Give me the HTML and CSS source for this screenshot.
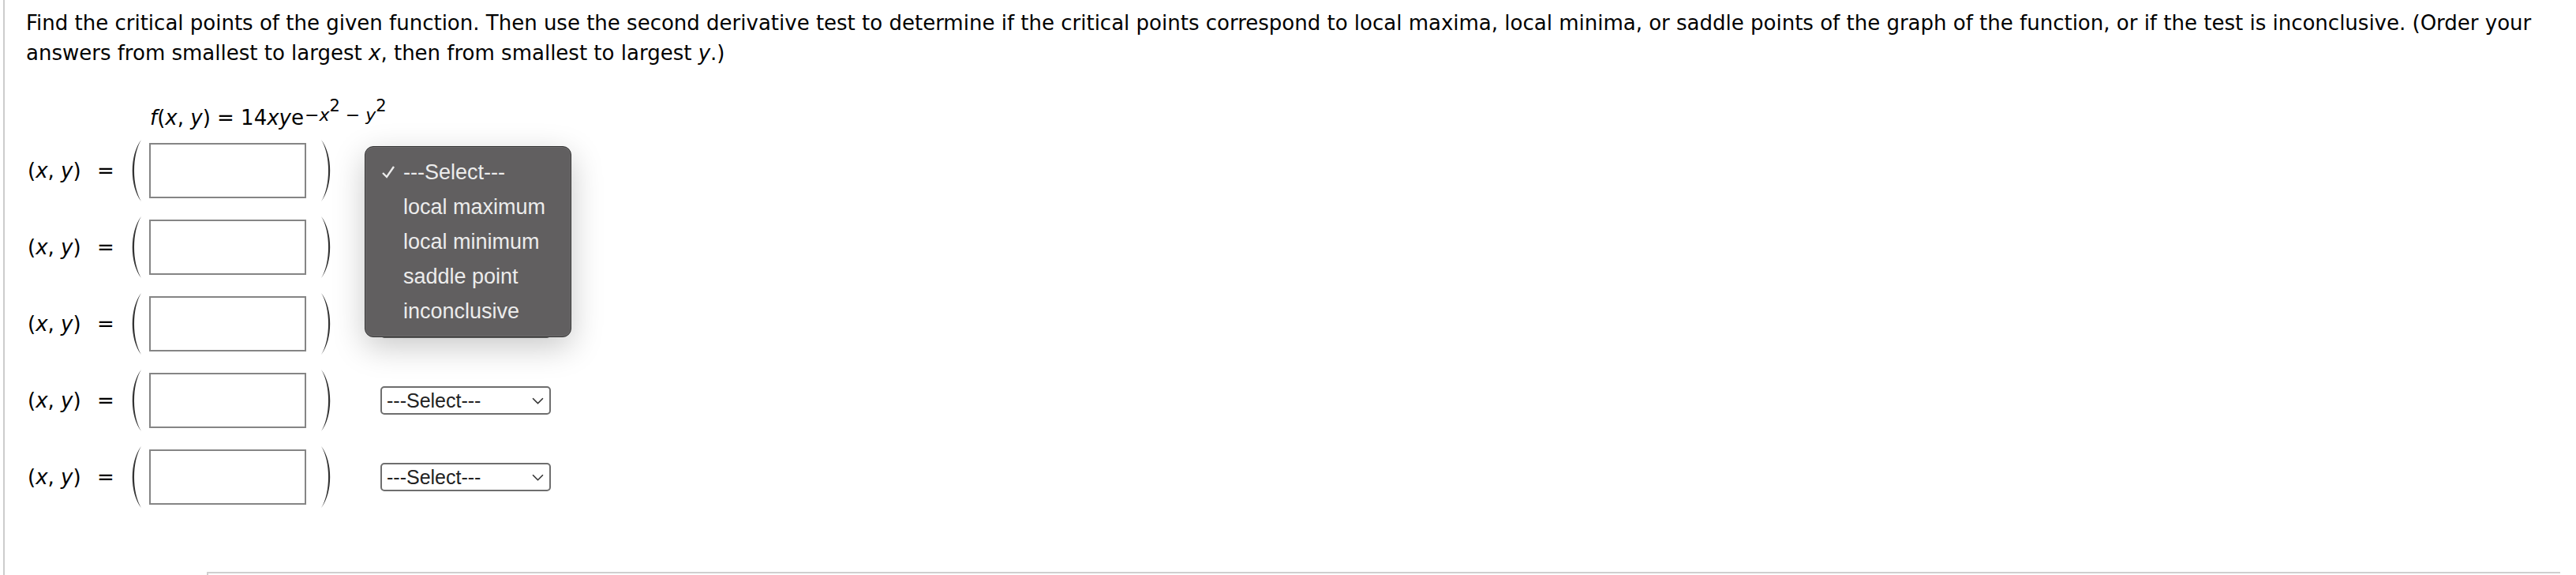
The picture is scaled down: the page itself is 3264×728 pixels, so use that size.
FILE: index.html
```html
<!DOCTYPE html>
<html lang="en">
  <head>
    <meta charset="UTF-8" />
    <meta name="viewport" content="width=device-width, initial-scale=1.0" />
    <title>Critical Points</title>
    <link rel="stylesheet" href="styles.css">
  </head>
  <body>
    <div class="question">
      <p class="prompt">Find the critical points of the given function. Then use the second derivative test to determine if the critical points correspond to local maxima, local minima, or saddle points of the graph of the function, or if the test is inconclusive. (Order your answers from smallest to largest <i>x</i>, then from smallest to largest <i>y</i>.)</p>

      <div class="formula">
        <i>f</i>(<i>x</i>, <i>y</i>) = 14<i>xy</i>e<sup class="exp">&minus;<i>x</i><sup>2</sup> &minus; <i>y</i><sup>2</sup></sup>
      </div>

      <div class="answers">
        <div class="row">
          <span class="label">(<i>x</i>, <i>y</i>) <span class="eq">=</span></span>
          <svg class="paren" viewBox="0 0 18 80"><path d="M17 1 C2 20 2 60 17 79 C5 60 5 20 17 1 Z" /></svg>
          <input class="point" type="text" />
          <svg class="paren" viewBox="0 0 18 80"><path d="M1 1 C16 20 16 60 1 79 C13 60 13 20 1 1 Z" /></svg>
          <div class="select"><span>---Select---</span><svg class="chev" viewBox="0 0 14 10"><path d="M1 2 L7 8 L13 2" /></svg></div>
        </div>
        <div class="row">
          <span class="label">(<i>x</i>, <i>y</i>) <span class="eq">=</span></span>
          <svg class="paren" viewBox="0 0 18 80"><path d="M17 1 C2 20 2 60 17 79 C5 60 5 20 17 1 Z" /></svg>
          <input class="point" type="text" />
          <svg class="paren" viewBox="0 0 18 80"><path d="M1 1 C16 20 16 60 1 79 C13 60 13 20 1 1 Z" /></svg>
          <div class="select"><span>---Select---</span><svg class="chev" viewBox="0 0 14 10"><path d="M1 2 L7 8 L13 2" /></svg></div>
        </div>
        <div class="row">
          <span class="label">(<i>x</i>, <i>y</i>) <span class="eq">=</span></span>
          <svg class="paren" viewBox="0 0 18 80"><path d="M17 1 C2 20 2 60 17 79 C5 60 5 20 17 1 Z" /></svg>
          <input class="point" type="text" />
          <svg class="paren" viewBox="0 0 18 80"><path d="M1 1 C16 20 16 60 1 79 C13 60 13 20 1 1 Z" /></svg>
          <div class="select"><span>---Select---</span><svg class="chev" viewBox="0 0 14 10"><path d="M1 2 L7 8 L13 2" /></svg></div>
        </div>
        <div class="row">
          <span class="label">(<i>x</i>, <i>y</i>) <span class="eq">=</span></span>
          <svg class="paren" viewBox="0 0 18 80"><path d="M17 1 C2 20 2 60 17 79 C5 60 5 20 17 1 Z" /></svg>
          <input class="point" type="text" />
          <svg class="paren" viewBox="0 0 18 80"><path d="M1 1 C16 20 16 60 1 79 C13 60 13 20 1 1 Z" /></svg>
          <div class="select"><span>---Select---</span><svg class="chev" viewBox="0 0 14 10"><path d="M1 2 L7 8 L13 2" /></svg></div>
        </div>
        <div class="row">
          <span class="label">(<i>x</i>, <i>y</i>) <span class="eq">=</span></span>
          <svg class="paren" viewBox="0 0 18 80"><path d="M17 1 C2 20 2 60 17 79 C5 60 5 20 17 1 Z" /></svg>
          <input class="point" type="text" />
          <svg class="paren" viewBox="0 0 18 80"><path d="M1 1 C16 20 16 60 1 79 C13 60 13 20 1 1 Z" /></svg>
          <div class="select"><span>---Select---</span><svg class="chev" viewBox="0 0 14 10"><path d="M1 2 L7 8 L13 2" /></svg></div>
        </div>

        <!-- open dropdown of the first row -->
        <ul class="menu">
          <li class="checked"><svg class="tick" viewBox="0 0 18 18"><path d="M2 10 L7 15 L16 2" /></svg>---Select---</li>
          <li>local maximum</li>
          <li>local minimum</li>
          <li>saddle point</li>
          <li>inconclusive</li>
        </ul>
      </div>

      <div class="next"></div>
    </div>
  </body>
</html>
```

FILE: styles.css
```css
html, body {
  margin: 0;
  padding: 0;
  background: #fff;
  height: 100%;
}
body {
  font-family: Verdana, "DejaVu Sans", sans-serif;
  font-size: 26px;
  color: #000;
  overflow: hidden;
}
.question {
  margin-left: 4px;
  border-left: 2px solid #cccccc;
  padding: 10px 20px 0 27px;
  height: 100%;
  box-sizing: border-box;
}
.prompt {
  margin: 0;
  line-height: 38px;
}
.formula {
  margin: 38px 0 0 157px;
  line-height: 38px;
  white-space: nowrap;
}
.exp {
  font-size: 22px;
  position: relative;
  top: -5px;
  vertical-align: baseline;
  margin-left: 1px;
}
.exp sup {
  font-size: 21px;
  position: relative;
  top: -4px;
}
.answers {
  position: relative;
  margin-top: 6px;
  display: flex;
  flex-direction: column;
  gap: 17px;
}
.row {
  display: flex;
  align-items: center;
  height: 80px;
}
.label {
  width: 127px;
  padding-left: 2px;
  white-space: nowrap;
}
.eq {
  margin-left: 12px;
}
.paren {
  width: 18px;
  height: 80px;
}
.paren path {
  fill: #333;
}
.row .paren:first-of-type {
  margin-right: 9px;
}
.point {
  width: 199px;
  height: 70px;
  box-sizing: border-box;
  border: 2px solid #858585;
  margin: 0 18px 0 0;
  padding: 0;
  background: #fff;
}
.select {
  width: 216px;
  height: 36px;
  box-sizing: border-box;
  border: 2px solid #6e6e6e;
  border-radius: 5px;
  margin-left: 58px;
  display: flex;
  align-items: center;
  justify-content: space-between;
  padding: 0 7px 0 6px;
  font-family: "Liberation Sans", Arial, sans-serif;
  font-size: 25px;
  color: #222;
}
.chev {
  width: 15px;
  height: 11px;
}
.chev path {
  fill: none;
  stroke: #333;
  stroke-width: 1.5;
}
.menu {
  position: absolute;
  left: 429px;
  top: 9px;
  width: 262px;
  height: 242px;
  box-sizing: border-box;
  margin: 0;
  padding: 10px 0 0 0;
  list-style: none;
  background: #615f60;
  border: 1px solid #333;
  border-radius: 11px;
  box-shadow: 0 12px 40px rgba(0, 0, 0, 0.22), 0 0 0 1px rgba(255, 255, 255, 0.08) inset;
  font-family: "Liberation Sans", Arial, sans-serif;
  font-size: 27px;
  color: #ececec;
}
.menu li {
  position: relative;
  height: 44px;
  line-height: 44px;
  padding-left: 48px;
}
.tick {
  position: absolute;
  left: 20px;
  top: 13px;
  width: 18px;
  height: 18px;
}
.tick path {
  fill: none;
  stroke: #ececec;
  stroke-width: 2.4;
}
.next {
  margin: 80px 0 0 229px;
  height: 6px;
  border-top: 2px solid #cfcfcf;
  border-left: 2px solid #cfcfcf;
}
```
